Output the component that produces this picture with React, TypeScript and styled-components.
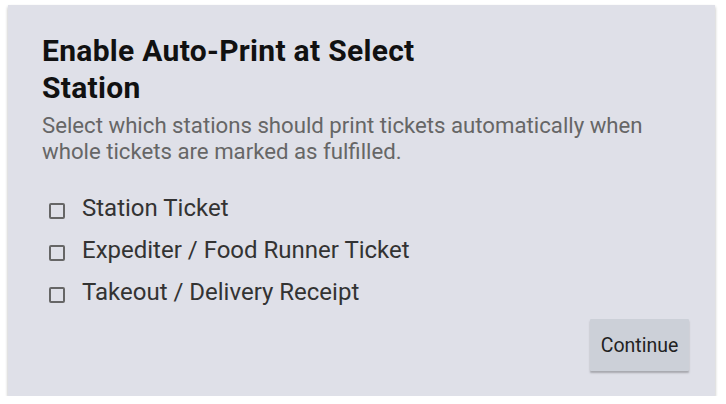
import { useState } from 'react';

import { createGlobalStyle, styled } from 'styled-components';

const GlobalStyle = createGlobalStyle`
  html, body {
    margin: 0;
    padding: 0;
    background: #ffffff;
  }

  body {
    font-family: Roboto, "Liberation Sans", sans-serif;
  }
`;

const Dialog = styled.div`
  box-sizing: border-box;
  display: flex;
  flex-direction: column;
  width: 707px;
  height: 391px;
  margin: 5px 0 0 8px;
  padding: 27px 26px 25px 34px;
  background: #dfe0e8;
  box-shadow: 0 2px 3px rgba(0, 0, 0, 0.3);
`;

const Title = styled.h2`
  max-width: 400px;
  margin: 0;
  color: #111111;
  font-size: 30px;
  font-weight: 700;
  line-height: 37px;
  letter-spacing: 0.3px;
`;

const Description = styled.p`
  margin: 6px 8px 0 0;
  color: #666666;
  font-size: 22.2px;
  line-height: 26px;
`;

const Options = styled.ul`
  display: flex;
  flex-direction: column;
  margin: 23px 0 0;
  padding: 0;
  list-style: none;
`;

const Option = styled.li`
  display: flex;
  align-items: center;
  gap: 17px;
  height: 42px;
  padding-left: 7px;
  color: #333333;
  font-size: 24px;
  cursor: pointer;
`;

const Box = styled.span<{ $checked: boolean }>`
  box-sizing: border-box;
  flex: none;
  width: 16px;
  height: 16px;
  margin-top: 6px;
  border: 2px solid #666666;
  border-radius: 2px;
  background: ${({ $checked }) => ($checked ? '#666666' : 'transparent')};
`;

const Footer = styled.div`
  display: flex;
  justify-content: flex-end;
  margin-top: auto;
`;

const Button = styled.button`
  width: 99px;
  height: 52px;
  padding: 0;
  border: none;
  border-radius: 1px;
  background: #ccd0d8;
  box-shadow: 0 2px 2px rgba(0, 0, 0, 0.25);
  color: #222222;
  font-family: Roboto, "Liberation Sans", sans-serif;
  font-size: 19.5px;
  cursor: pointer;
`;

const stations = ['Station Ticket', 'Expediter / Food Runner Ticket', 'Takeout / Delivery Receipt'];

export default function App() {
  const [checked, setChecked] = useState<string[]>([]);

  const toggle = (name: string) =>
    setChecked((list) => (list.includes(name) ? list.filter((n) => n !== name) : [...list, name]));

  return (
    <>
      <GlobalStyle />
      <Dialog>
        <Title>Enable Auto-Print at Select Station</Title>
        <Description>
          Select which stations should print tickets automatically when whole tickets are marked as fulfilled.
        </Description>

        <Options>
          {stations.map((name) => (
            <Option key={name} onClick={() => toggle(name)}>
              <Box $checked={checked.includes(name)} />
              {name}
            </Option>
          ))}
        </Options>

        <Footer>
          <Button>Continue</Button>
        </Footer>
      </Dialog>
    </>
  );
}
